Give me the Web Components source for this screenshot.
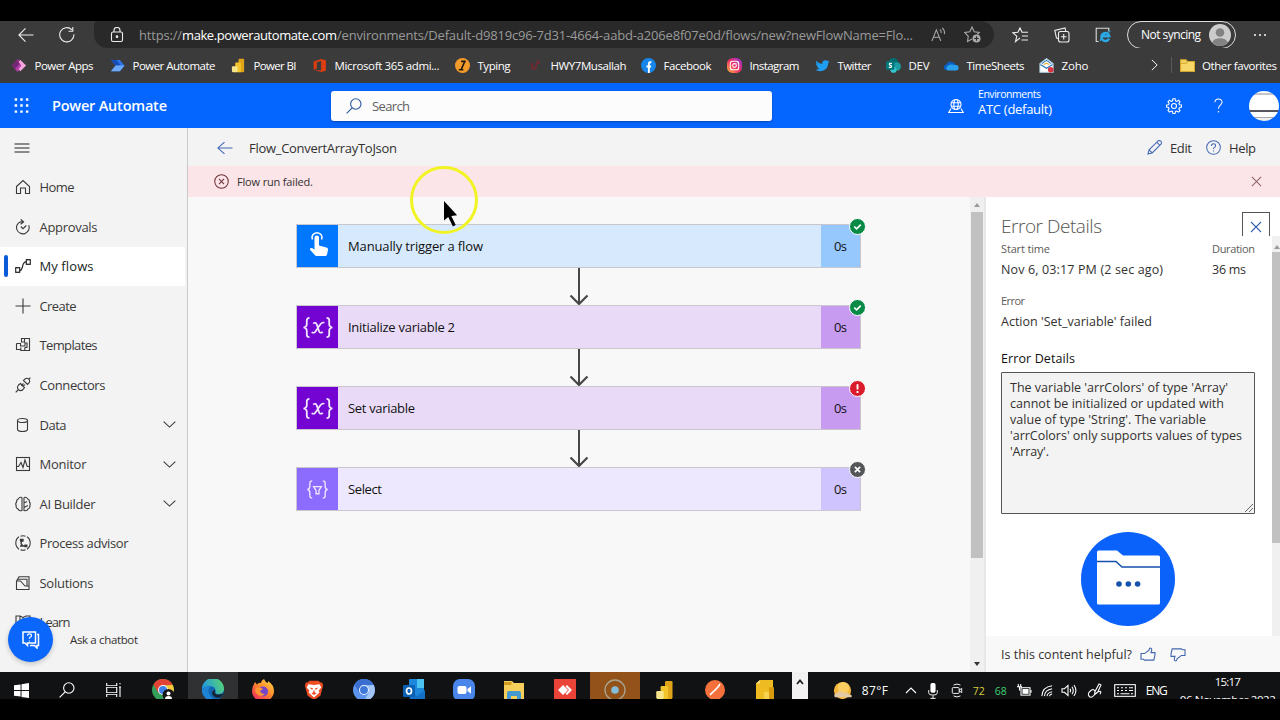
<!DOCTYPE html>
<html lang="en">
<head>
<meta charset="utf-8">
<title>Power Automate</title>
<style>
    html, body {
        margin: 0;
        background: #000;
    }
    body {
        width: 1280px;
        height: 720px;
        overflow: hidden;
        font-family: "Open Sans", "Noto Sans", sans-serif;
        font-size: 13px;
        color: #323130;
    }
</style>
</head>
<body>
<desktop-screen></desktop-screen>

<script>
// icon name -> [viewBox, markup]
const ICONS = {
    back: ["0 0 16 16", `<path d="M15.5 8H1M7.5 1.3L.9 8l6.6 6.7"/>`],
    reload: ["0 0 16 16", `<path d="M14.9 7.2A7.1 7.1 0 1 1 12.9 2.8M13.8 0v4.300H9.500"/>`],
    lock: ["0 0 14 16", `<rect x="1.500" y="5" width="11" height="9.500" rx="1.500"/><path d="M4 5V3.500a3 3 0 0 1 6 0V5"/><circle cx="7" cy="9.700" r=".8" fill="currentColor"/>`],
    aloud: ["0 0 16 16", `<path d="M1 15L5.700 3l4.800 12M2.500 11h6.300M9.500 2.500q1.800 1.800 1.300 4M12 1q3 2.800 2.300 6.500"/>`],
    staradd: ["0 0 17 17", `<path d="M8 13L3.500 15.500l.8-5.200L.8 6.500l5-.7L8 1l2.200 4.800 5 .7-2 2"/><circle cx="12.500" cy="12.500" r="4" fill="#aaa" stroke="none"/><path d="M12.500 10.300v4.400M10.300 12.500h4.400" stroke="#2a2a2a"/>`],
    favs: ["0 0 17 16", `<path d="M8 11L3.500 14.500l1.300-5.300L1 5.800l4.900-.5L8 .9l2 4.300h6M10 9h6M9.500 13h6.500"/>`],
    collect: ["0 0 16 16", `<path d="M4 11.500L2.500 11 .8 3.500 11 .9l.7 3"/><rect x="4.500" y="4.500" width="10.500" height="10.500" rx="2"/><path d="M9.700 7v5.500M7 9.700h5.500"/>`],
    iemode: ["0 0 16 16", `<path d="M3.500 14.500H1.200V1.200h12.600V4" stroke="#ddd"/><path d="M14 11.700A4 4 0 1 1 14.300 9.300H6.700" stroke="#2ba9e6" stroke-width="2.400"/><path d="M5 14Q9 5 15.500 4.500" stroke="#2ba9e6"/>`],
    user: ["0 0 22 22", `<circle cx="11" cy="11" r="11" fill="#ccc" stroke="none"/><circle cx="11" cy="8.500" r="4.300" fill="#828282" stroke="none"/><path d="M3 18.500a8.500 6.500 0 0 1 16 0A11 11 0 0 1 3 18.500" fill="#828282" stroke="none"/>`],
    dots: ["0 0 14 4", `<g fill="currentColor" stroke="none"><circle cx="2" cy="2" r="1.100"/><circle cx="7" cy="2" r="1.100"/><circle cx="12" cy="2" r="1.100"/></g>`],
    powerapps: ["0 0 16 16", `<g stroke="none"><path d="M6 1L0 8l6 7 5-5V5z" fill="#b33ba5"/><path d="M6 1l2 5-5 6-3-4z" fill="#742774"/><path d="M9 2l6 6-6 6-2-2 3-4-3-4z" fill="#f2a6df"/></g>`],
    flow: ["0 0 16 16", `<g stroke="none"><path d="M1 2h9.500l5 6-5 6H1l5-6z" fill="#2f74ea"/><path d="M1 2h6l4.500 6H6z" fill="#164cb8"/><path d="M6 8h9.500l-5 6H1z" fill="#6ba9f8"/></g>`],
    powerbi: ["0 0 16 18", `<g stroke="none"><rect x="8" y="1" width="6" height="16" rx="1" fill="#e0a418"/><rect x="4.500" y="5.500" width="6" height="11.500" rx="1" fill="#f2c52c"/><rect x="1" y="10" width="6" height="7" rx="1" fill="#f9e589"/></g>`],
    office: ["0 0 14 16", `<path d="M1.500 12.500V3.800L8.500 1 13 2.300v11.400L8.500 15l-7-2.500 7 .7V3.300L4.500 4.500v6.800z" fill="#dc3e12" stroke="none"/>`],
    typing: ["0 0 16 16", `<circle cx="8" cy="8" r="8" fill="#f59b2c" stroke="none"/><path d="M6.500 3.500h5M4 12.500h5M10.500 3.500l-4 9" stroke="#251a12" stroke-width="1.800"/>`],
    musallah: ["0 0 16 16", `<path d="M2 6l3 1-1 4 4 1 1-6M9 7l2-4 1 3" stroke="#7a2630" stroke-width="1.500"/>`],
    facebook: ["0 0 16 16", `<circle cx="8" cy="8" r="8" fill="#1686ed" stroke="none"/><path d="M11 4.500H9.700q-1.300 0-1.300 1.500v10M5.800 9h5" stroke="#fff" stroke-width="2"/>`],
    instagram: ["0 0 16 16", `<defs><linearGradient id="ig" x1="0" y1="1" x2="1" y2="0"><stop offset="0" stop-color="#fdb93a"/><stop offset=".5" stop-color="#ee2d66"/><stop offset="1" stop-color="#8a35d8"/></linearGradient></defs><rect width="16" height="16" rx="6" fill="url(#ig)" stroke="none"/><rect x="3.500" y="3.500" width="9" height="9" rx="2.500" stroke="#fff"/><circle cx="8" cy="8" r="2" stroke="#fff"/><circle cx="10.700" cy="5.300" r=".6" fill="#fff" stroke="none"/>`],
    twitter: ["0 0 16 16", `<path d="M1 3q3 3.300 6.800 3.300C7.500 3.500 9 2.300 10.800 2.300q1.400 0 2.200.9l2-.7-1 1.800 1.500-.3-1.500 1.700C14 11 10 14 5.800 14 3.500 14 2 13.500.5 12.500q2.700.2 4.400-1.200-2.300-.2-2.900-2.200h1.300Q1 8.200.9 5.700l1.400.4Q.3 4.500 1 3z" fill="#1f9df0" stroke="none"/>`],
    sharepoint: ["0 0 16 16", `<g stroke="none"><circle cx="8" cy="5" r="5" fill="#036c70"/><circle cx="11.500" cy="9" r="4.500" fill="#1a9ba1"/><circle cx="8" cy="12.500" r="3.300" fill="#37c6d0"/><rect y="3.500" width="9" height="9" rx="1" fill="#03787c"/></g><path d="M6.300 6q-2.800-1-2.800.7 0 .9 1.200 1.200 1.400.4 1.300 1.300-.3 1.400-3 .5" stroke="#fff" stroke-width="1.200"/>`],
    onedrive: ["0 0 17 12" , `<g stroke="none"><path d="M3 11A3 3 0 0 1 2.500 5Q5 0 10 2.500q2.500 1 3 3L7 11z" fill="#0a5fc0"/><path d="M4 11.500a3 3 0 0 1 0-5l3-1.500 6 .5a3 3 0 0 1 1 6z" fill="#28a0f0"/></g>`],
    zoho: ["0 0 16 16", `<path d="M1 6L8 .8 15 6v9.200H1z" fill="#fff" stroke="#b7d7ec"/><path d="M1.500 7l6.500 4 6.500-4" stroke="#2f79be" stroke-width="1.300"/><path d="M3 6l5-3.500L13 6" stroke="#2f79be"/><path d="M5 7l3-1.500L11 7" stroke="#e4b23c" stroke-width="1.300"/><circle cx="12.500" cy="12.500" r="3" fill="#db3340" stroke="none"/>`],
    next: ["0 0 8 14", `<path d="M1 1l6 6-6 6"/>`],
    folder: ["0 0 16 14", `<path d="M.5 13.500V.8h6l1.500 2h7.500v10.700z" fill="#f6d767" stroke="#d3a52c"/><path d="M.5 4.500h6l1.500-1.700"  stroke="#d3a52c"/>`],
    waffle: ["0 0 16 16", `<path d="M.7 1.500h2.600M6.700 1.500h2.600M12.700 1.500h2.600M.7 8h2.600M6.700 8h2.600M12.700 8h2.600M.7 14.500h2.600M6.700 14.500h2.600M12.700 14.500h2.600" stroke-width="2.600"/>`],
    search: ["0 0 16 16", `<circle cx="9.800" cy="6" r="5.200"/><path d="M6.200 9.800L.6 15.400"/>`],
    globe: ["0 0 16 16", `<circle cx="8" cy="6.500" r="5"/><ellipse cx="8" cy="6.500" rx="2.200" ry="5"/><path d="M3.300 4.800h9.400M3.300 8.300h9.400M3 10.500L.8 14.500h14.400L13 10.500"/>`],
    gear: ["0 0 16 16", `<path d="M6.900.8h2.200l.4 2 1.300.6 1.800-1.200 1.400 1.500-1.100 1.700.6 1.300 2 .3v2.100l-2 .5-.6 1.300 1.100 1.700-1.500 1.500-1.700-1.100-1.300.5-.4 2H6.900l-.4-2-1.300-.5-1.700 1.100L2 12.500l1.100-1.700-.6-1.300-2-.5V7l2-.3.6-1.300L2 3.700l1.500-1.500 1.700 1.200 1.300-.6z"/><circle cx="8" cy="8" r="2.500"/>`],
    question: ["0 0 10 16", `<path d="M1 4.500Q1.300 1 5 1t4 3.300Q9 6 7 7.700 5 9.300 5 11.500"/><circle cx="5" cy="14.700" r=".8" fill="currentColor" stroke="none"/>`],
    menu: ["0 0 16 10", `<path d="M.5 1h15M.5 5h15M.5 9h15"/>`],
    home: ["0 0 16 16", `<path d="M1.500 7.500L8 1.500l6.500 6v7h-4V9h-5v5.500h-4z"/>`],
    approvals: ["0 0 16 16", `<path d="M13.700 6.200A6.300 6.300 0 1 1 5.500 2.700L8.300 3M5.800 .3l2.800 2.700-3 2.300M5.800 7.500l2.200 2.200L11.300 6.500"/>`],
    flows: ["0 0 16 14", `<rect x=".7" y="8.500" width="4" height="4"/><rect x="11.300" y="1.500" width="4" height="4"/><path d="M4.700 11q2 0 3-4t3.600-3.600"/>`],
    plus: ["0 0 16 16", `<path d="M8 .5v15M.5 8h15"/>`],
    templates: ["0 0 16 16", `<path d="M6.500 5.500v-4h8v12h-4.700v-3M9.500 1.500v3.500h-3M1.500 6.500h4v2.500H10V6h2v4.500H9.800M1.500 6.500v6h4.300M5.800 10.500v3h4"/>`],
    connectors: ["0 0 16 16", `<path d="M5.500 6.500l4 4-1.500 2q-2 2-4.500.3Q1.500 10.500 3.500 8zM3 13l-2.300 2.300M8.500 3.500l4 4L14 6q1.500-2-.2-3.800T10 2zM13.500 2.500L15.400.6M6.300 8.800L8.500 6.500M7.700 10L10 7.500"/>`],
    data: ["0 0 16 16", `<ellipse cx="7.500" cy="3.500" rx="5" ry="2"/><path d="M2.500 3.500v9q.5 2 5 2t5-2v-9"/>`],
    monitor: ["0 0 16 16", `<rect x="1.500" y="1.500" width="13" height="13"/><path d="M1.500 10.500h2L6 6.500l2 5L10 4l2.200 6.500h2"/>`],
    ai: ["0 0 16 16", `<path d="M7 1.500v13q-3 1-4-1.500Q.5 12 1.200 9.500q-1-2 .4-3.500Q1.300 3.500 3.300 3 4.500.5 7 1.500M9 1.500v13q3 1 4-1.500 2.500-1 1.800-3.500 1-2-.4-3.500.3-2.500-1.700-3Q11.500.5 9 1.500M9 7l3-1.500M9 11.500L13 9.500"/>`],
    process: ["0 0 16 16", `<path d="M4 1.800Q.8 4 .8 8T4 14.200M12 1.800q3.200 2.200 3.200 6.200T12 14.200M5.500 1.300q2.500-1 5 0M5.500 14.700q2.500 1 5 0"/><path d="M5.500 4.500h2.500v1.500H5.500zM6.700 6l-.7 2.500 1.500 2M5 11h2.500M10 10.200v1.300h1.800v-1.300zM7.500 11H10" stroke-width="1.300"/>`],
    solutions: ["0 0 16 16", `<path d="M1.500 14.500v-8.300L4 1.800h10v12.700zM3 4.200h9V11M1.500 6h4l4.500 5h4"/>`],
    learn: ["0 0 16 16", `<path d="M1 14V2h4l3 1.500L11 2h4v12h-4l-3 1.500L5 14zM5 2v12M8 3.500v12"/>`],
    down: ["0 0 14 8", `<path d="M.7.7L7 7 13.300.7"/>`],
    chatbot: ["0 0 18 18", `<path d="M1 1h12.500v11H5.500v2.500L3 12H1zM15 3.500h1.500v11h-1.500v2.500l-2.500-2.500H8" stroke-width="1.500"/><path d="M5.500 4.800q0-2 2-2t2 1.800q0 1-1.300 1.700-.8.500-.8 1.500M7.400 9.500v1" stroke-width="1.200"/>`],
    pencil: ["0 0 16 16", `<path d="M1 15l1.200-4.500L11.800.9Q13.500.3 14.700 1.300t.4 2.900L5.500 13.800zM10.500 2.500l3 3M2.200 10.500l3.300 3.300"/>`],
    help: ["0 0 16 16", `<circle cx="8" cy="8" r="7.300"/><path d="M5.800 6.300q0-2.300 2.200-2.300t2.200 2Q10.200 7 9 7.800T8 9.800M8 11.300v1"/>`],
    failed: ["0 0 16 16", `<circle cx="8" cy="8" r="7.200"/><path d="M5.300 5.300l5.400 5.400M10.700 5.300l-5.400 5.400"/>`],
    close: ["0 0 12 12", `<path d="M1 1l10 10M11 1L1 11"/>`],
    touch: ["0 0 24 30", `<path d="M5.500 8A5 5 0 1 1 14.500 8" stroke-width="1.600"/><path d="M7.500 6q0-2.200 2.300-2.200T12 6v8.500l7.500 2q1.800.6 1.500 2.500l-1 5.500q-.2 1.200-1.500 1.200H9.500Q8.500 25.700 8 25L3.200 19.300q-.8-1 .2-1.800t2.100 0L7.500 19z" fill="currentColor" stroke="none"/>`],
    variable: ["0 0 30 24", `<path d="M7 2Q4.500 2 4.500 4.500v4Q4.500 11.500 1.500 12q3 .5 3 3.500v4Q4.500 22 7 22M23 2q2.500 0 2.500 2.500v4q0 3 3 3.500-3 .5-3 3.500v4Q25.500 22 23 22" stroke-width="1.700"/><path d="M10.500 8Q13 5.500 14 9.500l2 6.500q1 2.800 3.500.5M21 7Q18.500 6 16 10.500T12 17q-1.200.9-3 0" stroke-width="1.700"/>`],
    select: ["0 0 24 20", `<path d="M6.500 1Q4 1 4 3.500v3Q4 9.500 1.500 10 4 10.500 4 13.500v3Q4 19 6.500 19M17.500 1Q20 1 20 3.500v3Q20 9.500 22.500 10 20 10.500 20 13.500v3Q20 19 17.500 19M8 7h8l-2.500 4v3.500h-3V11z" stroke-width="1.400"/>`],
    check: ["0 0 16 16", `<path d="M4.500 8l2.500 2.500L11.500 6" stroke-width="1.800"/>`],
    bang: ["0 0 16 16", `<path d="M8 3.500v5.500M8 10.700v2" stroke-width="2"/>`],
    cross: ["0 0 16 16", `<path d="M5.200 5.200l5.600 5.600M10.800 5.200l-5.600 5.600" stroke-width="1.800"/>`],
    arrow: ["0 0 20 38", `<path d="M10 0v36" stroke-width="1.800"/><path d="M1.500 27.500L10 36l8.500-8.500" stroke="#484644" stroke-width="2.200"/>`],
    like: ["0 0 16 16", `<path d="M1 7h3.500L9 3.500q.3-2.700 1.500-2.500 1.700.5 1.200 2.500L11 6h4v2.500L13.800 14H4.500L3.500 13H1z"/>`],
    runs: ["0 0 94 94", `<circle cx="47" cy="47" r="47" fill="#0b62fb" stroke="none"/><path d="M16 20q0-1.500 1.500-1.500h18.500l6 5h35.500q1.500 0 1.500 1.500v46q0 1.500-1.500 1.500h-60q-1.500 0-1.500-1.500z" fill="#fff" stroke="none"/><path d="M16 29.500h19l6 5.500h38" stroke="#1652ad" stroke-width="1.500"/><g fill="#1652ad" stroke="none"><circle cx="38" cy="52" r="2.800"/><circle cx="47.300" cy="52" r="2.800"/><circle cx="56.600" cy="52" r="2.800"/></g>`],
    windows: ["0 0 16 16", `<path d="M0 2.500l7-1v6H0zM8 1.300l8-1.300v7.500H8zM0 8.500h7v6l-7-1zM8 8.500h8V16l-8-1.200z" fill="#fff" stroke="none"/>`],
    taskview: ["0 0 16 16", `<path d="M.7 0v3h10V0M.7 16v-3h10v3M.7 5h10v6H.7zM14 0v1.500M14 4.500V16M13 4.500h2"/>`],
    chrome: ["0 0 22 22", `<g stroke="none"><circle cx="11" cy="11" r="11" fill="#34a05a"/><path d="M1.500 5.500A11 11 0 0 1 20.700 6L11 6.500 6.500 14z" fill="#e24335"/><path d="M11 6.500l9.700-.5A11 11 0 0 1 11 22l5-9z" fill="#fbc83a"/><circle cx="11" cy="11" r="5" fill="#fff"/><circle cx="11" cy="11" r="4" fill="#3e7fe8"/><circle cx="16.500" cy="16" r="6" fill="#151515"/><circle cx="16.500" cy="14.500" r="2" fill="#fff"/><path d="M13 20q0-3 3.500-3t3.500 3z" fill="#fff"/></g>`],
    edge: ["0 0 22 22", `<defs><linearGradient id="ed" x1="0" y1=".3" x2="1" y2="0"><stop offset="0" stop-color="#2398dc"/><stop offset="1" stop-color="#5cda6b"/></linearGradient></defs><g stroke="none"><circle cx="11" cy="11" r="11" fill="#1264ae"/><path d="M0 10A11 11 0 0 1 22 10q0 5-6 5-3 0-2.500-2.500Q14 8 9 7.300 3.500 6.500 0 10" fill="url(#ed)"/><path d="M0 10Q3.500 6.500 9 7.300q-4.500 4-1 9T15 21.200Q8 23.500 3.500 19T0 10" fill="#1e83d2"/><path d="M13 11q.5 2-.5 3 2.500 3 9 .5l-3 4Q11.500 19.500 10 14.500 10 12 13 11" fill="#15222f"/></g>`],
    firefox: ["0 0 22 22", `<defs><linearGradient id="ff" x1="1" y1="0" x2=".2" y2="1"><stop offset="0" stop-color="#ffe14a"/><stop offset=".5" stop-color="#ff8a2a"/><stop offset="1" stop-color="#ed2862"/></linearGradient></defs><g stroke="none"><path d="M2 5l1-2 2 2.500Q7 3 9 4q0-2.500 3-4 1 3 4 4V2q6 4 6 10A11 10.500 0 0 1 0 12Q0 8 2 5" fill="url(#ff)"/><circle cx="11" cy="12.500" r="5" fill="#7446cc"/><path d="M4 9q3-2 7 1l-3 2q1 3 5 3-4 4-8 0-3-3-1-6" fill="#ff9532"/></g>`],
    brave: ["0 0 22 24", `<g stroke="none"><path d="M6 1h10l2 2 2 0 1 4-3 12-7 5-7-5L1 7l1-4h2z" fill="#ee4c25"/><path d="M5 5l6 1 6-1 2 4-3 4 1 2-3 3-3 3-3-3-3-3 1-2-3-4z" fill="#fff"/><path d="M6 9l4 1-1 2zM16 9l-4 1 1 2zM11 11l1 4 2 1-3 2-3-2 2-1z" fill="#ee4c25"/></g>`],
    chromium: ["0 0 22 22", `<g stroke="none"><circle cx="11" cy="11" r="11" fill="#5d94ee"/><path d="M1.500 5.500A11 11 0 0 1 20.700 6L11 6.500 6.500 14z" fill="#3a6fd0"/><path d="M11 6.500l9.700-.5A11 11 0 0 1 11 22l5-9z" fill="#a4c6f7"/></g><circle cx="11" cy="11" r="4.500" fill="#3f78d7" stroke="#e8f1ff"/>`],
    outlook: ["0 0 22 22", `<g stroke="none"><rect x="6" width="15" height="17" rx="1" fill="#1d87dc"/><path d="M14 0h7v9h-7z" fill="#4cc2f1"/><path d="M6 12l8 5 8-6v11H7z" fill="#1470c4"/><rect y="6" width="12" height="12" rx="1" fill="#0a61b4"/></g><ellipse cx="6" cy="12" rx="2.500" ry="3" stroke="#fff" stroke-width="1.700"/>`],
    zoom: ["0 0 22 22", `<g stroke="none"><rect width="22" height="22" rx="7" fill="#4a86e9"/><rect x="4.500" y="7" width="9" height="8" rx="2" fill="#fff"/><path d="M14.500 10l3.500-2.700v7.400L14.500 12z" fill="#fff"/></g>`],
    explorer: ["0 0 22 22", `<g stroke="none"><path d="M1 20V2h8l2 2h10v16z" fill="#f6ce5c"/><path d="M1 3h8l-1 3H1z" fill="#d39b22"/><path d="M4 21v-7q0-2 2-2h10q2 0 2 2v7h-4v-4H8v4z" fill="#4599cf"/></g>`],
    anydesk: ["0 0 22 22", `<g stroke="none"><rect width="22" height="22" fill="#ea4338"/><path d="M9 6l5 5-5 5-5-5zM13 6l5 5-5 5-1.500-1.500L15 11l-3.500-3.500z" fill="#fff"/></g>`],
    record: ["0 0 22 22", `<circle cx="11" cy="11" r="10" stroke="#aaa48f" stroke-width="1.300"/><circle cx="11" cy="11" r="3.800" fill="#83bdd8" stroke="none"/>`],
    postman: ["0 0 22 22", `<circle cx="11" cy="11" r="10" fill="#f4713d" stroke="none"/><path d="M6 16l8-8 2-3M6.500 15l6-5" stroke="#fff" stroke-width="1.600"/>`],
    pbidoc: ["0 0 22 24", `<g stroke="none"><path d="M2 5l4-4h13v22H2z" fill="#eebb22"/><path d="M2 5l4-4v4z" fill="#fbe17e"/><rect x="15" y="9" width="5" height="15" fill="#d99a0e"/><rect x="10" y="14" width="5" height="10" fill="#f7d24e"/></g>`],
    weather: ["0 0 22 22", `<circle cx="11" cy="11" r="9" fill="#f5b63f" stroke="none"/><circle cx="12" cy="8" r="6" fill="#f9cd60" stroke="none"/><path d="M3 18q-2-3 2-4 3-4 7-.5 4-1 5.500 1.500 4 0 3 3z" fill="#e4c9a6" stroke="none"/>`],
    up: ["0 0 12 7", `<path d="M1 6l5-5 5 5"/>`],
    stripup: ["0 0 8 6", `<path d="M1 5l3-3.500L7 5" stroke-width="1.800"/>`],
    mic: ["0 0 14 18", `<rect x="4" width="6" height="11" rx="2" fill="#fff" stroke="none"/><path d="M2 8v3q0 2.500 5 2.500t5-2.500V8M7 14v3M4 17.300h6"/>`],
    meet: ["0 0 14 18", `<path d="M3 2.500q4-2.500 8 0M3 15.500q4 2.500 8 0"/><rect x="1.500" y="5.500" width="8" height="7" rx="1"/><path d="M9.500 8.500l3-2v5l-3-2"/>`],
    battery: ["0 0 16 14", `<rect x="5" y="4" width="9" height="8"/><rect x="7" y="6" width="5" height="4" fill="#fff"/><path d="M15 6.500v3M1 3h5M2.300 3V0M4.700 3V0M3.500 3v4"/>`],
    wifi: ["0 0 14 14", `<path d="M1 13Q1.500 2.500 13 1M4 13q.5-7 9-8.500M7 13q.5-4 6-5M10 13q0-2 3-2.500" stroke-width="1.200"/>`],
    volume: ["0 0 16 14", `<path d="M1 5h2.500L7 1.500v11L3.500 9H1zM9 5q1.200 2 0 4M11 3q2.500 4 0 8M13 1q3.800 6 0 12"/>`],
    pen: ["0 0 16 16", `<path d="M8 9l4-8 2 1-3.500 8-3 2.500zM8 9Q7 6 4.500 7.500 0 11 2 14t5-1q2-3 5-4t1 3"/>`],
    keyboard: ["0 0 22 14", `<rect x=".7" y=".7" width="20.600" height="12.600"/><path d="M3 4h2M7 4h2M11 4h2M15 4h4M3 7h2M7 7h2M11 7h2M15 7h4M3 10.500h2M6.500 10.500h9M17 10.500h2"/>`],
    pointer: ["0 0 16 26", `<path d="M0 0v19.500l4.500-3.500 5 9.500 3-1.600-4.700-9 6.200-.7z" fill="#000" stroke="none"/>`]
};

class UiIcon extends HTMLElement {
    constructor() {
        super();
        this.attachShadow({mode: "open"});
    }

    connectedCallback() {
        const [viewBox, body] = ICONS[this.getAttribute("name")];
        const w = this.getAttribute("w") || 16;
        const h = this.getAttribute("h") || w;
        this.shadowRoot.innerHTML = `
<style>
    :host { display: inline-block; flex: none; width: ${w}px; height: ${h}px; }
    svg { display: block; }
</style>
<svg width="${w}" height="${h}" viewBox="${viewBox}" fill="none" stroke="currentColor" stroke-width="1.1" preserveAspectRatio="none">${body}</svg>`;
    }
}

// one line of text, tracked so that it takes exactly `w` pixels
class FitText extends HTMLElement {
    constructor() {
        super();
        this.attachShadow({mode: "open"});
    }

    connectedCallback() {
        const w = Number(this.getAttribute("w"));
        this.shadowRoot.innerHTML = `
<style>
    :host { display: block; flex: none; width: ${w}px; white-space: nowrap; }
    span { display: inline-block; }
</style>
<span><slot></slot></span>`;
        const span = this.shadowRoot.querySelector("span");
        const natural = span.getBoundingClientRect().width;
        const count = this.textContent.length;
        if (count > 1) span.style.letterSpacing = (w - natural) / (count - 1) + "px";
    }
}

// base for everything that only renders a static template
class View extends HTMLElement {
    constructor() {
        super();
        this.attachShadow({mode: "open"});
    }

    connectedCallback() {
        this.shadowRoot.innerHTML = this.render();
    }
}

class BrowserBar extends View {
    render() {
        return /*html*/`
<style>
    :host { display: flex; align-items: center; height: 27px; background: #3b3b3b; color: #eee; overflow: hidden; }
    .address { display: flex; align-items: center; width: 884px; height: 27px; padding-left: 16px; margin-left: 18px; border-radius: 4px 14px 14px 14px; background: #292929; color: #999; font-size: 13px; }
    .address ui-icon { color: #aaa; }
    .address .lock { color: #eee; margin-right: 15px; }
    b { font-weight: 400; color: #fff; }
    .sync { display: flex; align-items: center; box-sizing: border-box; width: 109px; height: 28px; margin: 0 17px 0 16px; border: 1px solid #ddd; border-radius: 14px; padding-left: 13px; gap: 8px; font-size: 12px; color: #fff; }
</style>
<ui-icon name="back" style="margin-left:18px"></ui-icon>
<ui-icon name="reload" style="margin-left:25px;margin-right:1px" w="16"></ui-icon>
<div class="address">
    <ui-icon class="lock" name="lock" w="14" h="16"></ui-icon>
    <fit-text w="43">https://</fit-text><fit-text w="155"><b>make.powerautomate.com</b></fit-text><fit-text w="576">/environments/Default-d9819c96-7d31-4664-aabd-a206e8f07e0d/flows/new?newFlowName=Flo...</fit-text>
    <ui-icon name="aloud" w="15" style="margin-left:18px"></ui-icon>
    <ui-icon name="staradd" w="17" style="margin-left:18px"></ui-icon>
</div>
<ui-icon name="favs" w="17" h="16" style="margin-left:18px"></ui-icon>
<ui-icon name="collect" w="16" style="margin-left:25px"></ui-icon>
<ui-icon name="iemode" w="16" style="margin-left:25px"></ui-icon>
<div class="sync"><fit-text w="60">Not syncing</fit-text><ui-icon name="user" w="22"></ui-icon></div>
<ui-icon name="dots" w="14" h="4"></ui-icon>`;
    }
}

class FavoritesBar extends View {
    render() {
        const items = [
            ["powerapps", "Power Apps", 59], ["flow", "Power Automate", 83], ["powerbi", "Power BI", 43],
            ["office", "Microsoft 365 admi...", 105], ["typing", "Typing", 33], ["musallah", "HWY7Musallah", 76],
            ["facebook", "Facebook", 48], ["instagram", "Instagram", 50], ["twitter", "Twitter", 34],
            ["sharepoint", "DEV", 21], ["onedrive", "TimeSheets", 58], ["zoho", "Zoho", 27]
        ];
        return /*html*/`
<style>
    :host { display: flex; align-items: center; box-sizing: border-box; height: 35px; padding-bottom: 1px; background: #3b3b3b; color: #fff; font-size: 11.500px; }
    .items { display: grid; align-items: center; padding-left: 12px; grid-template-columns: 98px 121px 81px 143px 73px 113px 86px 88px 71px 58px 95px 109px; }
    .item { display: flex; align-items: center; gap: 7.500px; }
    i { width: 1px; height: 16px; margin: 0 8px 0 13px; background: #595959; }
</style>
<div class="items">${items.map(([icon, label, w]) => `
    <div class="item"><ui-icon name="${icon}" w="15" h="${icon === "onedrive" ? 11 : 15}"></ui-icon><fit-text w="${w}">${label}</fit-text></div>`).join("")}
</div>
<ui-icon name="next" w="7" h="12" style="margin-left:3px"></ui-icon>
<i></i>
<ui-icon name="folder" w="15" h="13"></ui-icon>
<fit-text w="75" style="margin-left:7px">Other favorites</fit-text>`;
    }
}

class AppHeader extends View {
    render() {
        return /*html*/`
<style>
    :host { display: flex; align-items: center; height: 45px; background: #0566ff; color: #fff; }
    .brand { margin-left: 23px; font-size: 14.500px; font-weight: 600; }
    .search { display: flex; align-items: center; box-sizing: border-box; width: 441px; height: 30px; margin: 0 176px 0 164px; padding-left: 15px; gap: 10px; border-radius: 3px; background: #fcfcfd; color: #616161; box-shadow: 0 1px 2px #0347b5; }
    .search ui-icon { color: #2b579a; }
    .env { width: 188px; margin-left: 14px; padding-bottom: 7px; line-height: 15px; }
    .env small { font-size: 10.500px; }
    .avatar { width: 30px; height: 30px; margin-left: 26px; border-radius: 50%; flex: none; background: linear-gradient(#fff 0 8%, #c6c6ca 8% 12%, #fff 12% 65%, #55565d 65% 70%, #fff 70% 87%, #aaa 87% 91%, #eee 91%); }
</style>
<ui-icon name="waffle" w="15" style="margin-left:14px"></ui-icon>
<fit-text class="brand" w="115">Power Automate</fit-text>
<div class="search"><ui-icon name="search"></ui-icon><fit-text w="38">Search</fit-text></div>
<ui-icon name="globe" w="16"></ui-icon>
<div class="env"><small><fit-text w="63">Environments</fit-text></small><fit-text w="74">ATC (default)</fit-text></div>
<ui-icon name="gear" w="16"></ui-icon>
<ui-icon name="question" w="9" h="15" style="margin-left:32px"></ui-icon>
<div class="avatar"></div>`;
    }
}

class NavItem extends View {
    render() {
        const icon = this.getAttribute("icon");
        return /*html*/`
<style>
    :host { display: flex; align-items: center; box-sizing: border-box; height: 39.550px; margin-right: 2px; padding: 0 9px 0 4px; color: #3b3a39; }
    :host([selected]) { background: #fff; color: #201f1e; }
    i { width: 4px; height: 22px; margin-right: 7px; border-radius: 2px; }
    :host([selected]) i { background: #0b5ad8; }
    slot { display: block; }
    .label { flex: 1; margin-left: 8.500px; }
</style>
<i></i>
<ui-icon name="${icon}" w="16"></ui-icon>
<div class="label"><slot></slot></div>
${this.hasAttribute("open") ? `<ui-icon name="down" w="13" h="7"></ui-icon>` : ""}`;
    }
}

class SideNav extends View {
    render() {
        return /*html*/`
<style>
    :host { display: block; position: relative; box-sizing: border-box; width: 188px; height: 544px; border-right: 1px solid #cacacc; background: #f3f3f3; overflow: hidden; }
    .menu { display: flex; align-items: center; height: 39.500px; padding: 0 0 0 14px; color: #222; }
    .chat { position: absolute; left: 8px; bottom: 10px; display: flex; align-items: center; gap: 17px; font-size: 11.500px; }
    .bubble { display: grid; place-items: center; width: 45px; height: 45px; border-radius: 50%; background: #0b66fb; color: #fff; box-shadow: 0 2px 5px #0003; }
    .ask { background: #f3f3f3; line-height: 22px; }
</style>
<div class="menu"><ui-icon name="menu" w="16" h="10"></ui-icon></div>
<nav-item icon="home"><fit-text w="35">Home</fit-text></nav-item>
<nav-item icon="approvals"><fit-text w="58">Approvals</fit-text></nav-item>
<nav-item icon="flows" selected><fit-text w="54">My flows</fit-text></nav-item>
<nav-item icon="plus"><fit-text w="37">Create</fit-text></nav-item>
<nav-item icon="templates"><fit-text w="58">Templates</fit-text></nav-item>
<nav-item icon="connectors"><fit-text w="66">Connectors</fit-text></nav-item>
<nav-item icon="data" open><fit-text w="27">Data</fit-text></nav-item>
<nav-item icon="monitor" open><fit-text w="47">Monitor</fit-text></nav-item>
<nav-item icon="ai" open><fit-text w="56">AI Builder</fit-text></nav-item>
<nav-item icon="process"><fit-text w="89">Process advisor</fit-text></nav-item>
<nav-item icon="solutions"><fit-text w="54">Solutions</fit-text></nav-item>
<nav-item icon="learn"><fit-text w="31">Learn</fit-text></nav-item>
<div class="chat">
    <div class="bubble"><ui-icon name="chatbot" w="18"></ui-icon></div>
    <div class="ask"><fit-text w="68">Ask a chatbot</fit-text></div>
</div>`;
    }
}

class RunHeader extends View {
    render() {
        return /*html*/`
<style>
    .bar { display: flex; align-items: center; box-sizing: border-box; height: 38px; padding: 1px 24px 0 29px; background: #f3f3f4; }
    .bar ui-icon { color: #4569b5; }
    .title { margin-left: 16px; padding-top: 1px; flex: 1; }
    .banner { display: flex; align-items: center; height: 31px; padding: 0 18px 0 26px; background: #fce5e8; font-size: 11px; }
    .banner fit-text { margin-left: 8px; }
    .banner ui-icon { color: #6f3138; }
    .fill { flex: 1; }
</style>
<div class="bar">
    <ui-icon name="back" w="16" h="14"></ui-icon>
    <div class="title"><fit-text w="148">Flow_ConvertArrayToJson</fit-text></div>
    <ui-icon name="pencil" w="15"></ui-icon><fit-text w="22" style="margin-left:8px">Edit</fit-text>
    <ui-icon name="help" w="15" style="margin-left:14px"></ui-icon><fit-text w="27" style="margin-left:8px">Help</fit-text>
</div>
<div class="banner">
    <ui-icon name="failed" w="15"></ui-icon><fit-text w="76">Flow run failed.</fit-text>
    <div class="fill"></div>
    <ui-icon name="close" w="11" style="color:#8d6266"></ui-icon>
</div>`;
    }
}

class FlowStep extends View {
    render() {
        const icon = this.getAttribute("icon");
        const sizes = {select: `w="23" h="19"`, touch: `w="24" h="28"`, variable: `w="32" h="23"`};
        return /*html*/`
<style>
    :host { display: flex; position: relative; box-sizing: border-box; width: 565px; height: 44px; border: 1px solid #c9c6ce; background: var(--body); color: #111; font-size: 13px; }
    .icon { display: grid; place-items: center; width: 41px; background: var(--strong); color: #f1e6fc; }
    .icon.touch { color: #fff; }
    .icon.touch ui-icon { margin-left: 3px; }
    .name { flex: 1; align-self: center; padding-left: 10px; }
    .time { display: grid; place-items: center; width: 39px; background: var(--soft); }
    .badge { position: absolute; right: -6px; top: -7px; width: 15px; height: 15px; border: 1px solid #fff; border-radius: 50%; background: var(--badge); color: #fff; }
</style>
<div class="icon ${icon}"><ui-icon name="${icon}" ${sizes[icon]}></ui-icon></div>
<div class="name"><slot></slot></div>
<div class="time"><fit-text w="13">0s</fit-text></div>
<div class="badge"><ui-icon name="${this.getAttribute("status")}" w="15"></ui-icon></div>`;
    }
}

class FlowCanvas extends View {
    render() {
        return /*html*/`
<style>
    :host { display: flex; width: 798px; height: 475px; background: #f8f8f8; overflow: hidden; }
    .steps { display: flex; flex-direction: column; align-items: center; width: 781px; margin-right: 1px; padding-top: 27px; }
    ui-icon { color: #333; }
    .steps > ui-icon { margin-bottom: -1px; }
    flow-step { --badge: #078a45; }
    .trigger { --strong: #0077ff; --body: #d7eafd; --soft: #97c8fd; }
    .var { --strong: #7404d2; --body: #e9dbf8; --soft: #c69bf0; }
    .select { --strong: #8c6cff; --body: #ede8fe; --soft: #d0c4fe; --badge: #55565a; }
    .scroll { display: flex; flex-direction: column; align-items: center; width: 14px; background: #f0f0f0; border-right: 2px solid #e8e8e8; }
    .scroll i { width: 12px; height: 346px; background: #c1c1c1; }
    .up, .down { width: 0; height: 0; border: 3.500px solid transparent; }
    .up { border-bottom: 4px solid #999; border-top: 0; margin: 6px 0 5px; }
    .down { border-top: 4px solid #333; border-bottom: 0; margin-top: auto; margin-bottom: 6px; }
</style>
<div class="steps">
    <flow-step class="trigger" icon="touch" status="check"><fit-text w="135">Manually trigger a flow</fit-text></flow-step>
    <ui-icon name="arrow" w="20" h="38"></ui-icon>
    <flow-step class="var" icon="variable" status="check"><fit-text w="107">Initialize variable 2</fit-text></flow-step>
    <ui-icon name="arrow" w="20" h="38"></ui-icon>
    <flow-step class="var" icon="variable" status="bang" style="--badge:#db1b2b"><fit-text w="67">Set variable</fit-text></flow-step>
    <ui-icon name="arrow" w="20" h="38"></ui-icon>
    <flow-step class="select" icon="select" status="cross"><fit-text w="34">Select</fit-text></flow-step>
</div>
<div class="scroll"><div class="up"></div><i></i><div class="down"></div></div>`;
    }
}

class ErrorPanel extends View {
    render() {
        return /*html*/`
<style>
    :host { display: flex; flex-direction: column; flex: 1; height: 475px; background: #fff; }
    .head { display: flex; justify-content: space-between; height: 39px; padding: 0 10px 0 15px; }
    h2 { margin: 15px 0 0; font-size: 19px; line-height: 28px; font-weight: 300; color: #55544f; }
    .x { display: grid; place-items: center; box-sizing: border-box; width: 28px; height: 24px; margin-top: 15px; padding-top: 4px; border: 1px solid #555; border-bottom: 0; color: #3464ae; }
    .body { display: flex; height: 400px; }
    .main { width: 254px; padding-left: 15px; padding-right: 17px; }
    small { display: block; font-size: 11px; line-height: 16px; color: #5c5b59; }
    .row { display: flex; justify-content: space-between; margin-top: 4.500px; }
    .row > :last-child { width: 43px; }
    .value { margin-top: 3px; line-height: 20px; font-size: 12.500px; }
    h3 { margin: 17px 0 3px; font-size: 12.500px; line-height: 20px; font-weight: 500; color: #111; }
    .box { position: relative; box-sizing: border-box; width: 254px; height: 142px; padding: 7px 8px; border: 1px solid #555; border-radius: 1px; background: #f3f3f3; font-size: 12.500px; line-height: 16px; }
    .grip { position: absolute; right: 1px; bottom: 1px; }
    .art { display: flex; justify-content: center; padding-top: 18px; }
    .scroll { width: 8px; background: #f0f0f0; overflow: hidden; }
    .scroll i { display: block; height: 291px; margin-top: 3px; background: #c1c1c1; }
    .tri { width: 0; height: 0; margin: 9px 0 0 2px; border: 3.500px solid transparent; border-top: 0; border-bottom: 4px solid #999; }
    .foot { display: flex; align-items: center; height: 36px; padding-left: 15px; background: #f8f8f8; font-size: 12.500px; }
    .foot ui-icon { color: #4166ad; }
    .flip { transform: rotate(180deg); margin-left: 14px; }
</style>
<div class="head">
    <h2><fit-text w="101">Error Details</fit-text></h2>
    <div class="x"><ui-icon name="close" w="12"></ui-icon></div>
</div>
<div class="body">
    <div class="main">
        <div class="row">
            <div><small><fit-text w="49">Start time</fit-text></small><div class="value"><fit-text w="162">Nov 6, 03:17 PM (2 sec ago)</fit-text></div></div>
            <div><small><fit-text w="43">Duration</fit-text></small><div class="value"><fit-text w="34">36 ms</fit-text></div></div>
        </div>
        <small style="margin-top:13px"><fit-text w="24">Error</fit-text></small>
        <div class="value"><fit-text w="151">Action 'Set_variable' failed</fit-text></div>
        <h3><fit-text w="74">Error Details</fit-text></h3>
        <div class="box">
            <fit-text w="218">The variable 'arrColors' of type 'Array'</fit-text>
            <fit-text w="214">cannot be initialized or updated with</fit-text>
            <fit-text w="196">value of type 'String'. The variable</fit-text>
            <fit-text w="232">'arrColors' only supports values of types</fit-text>
            <fit-text w="39">'Array'.</fit-text>
            <svg class="grip" width="8" height="8" stroke="#666"><path d="M0 8L8 0M4 8l4-4"/></svg>
        </div>
        <div class="art"><ui-icon name="runs" w="94"></ui-icon></div>
    </div>
    <div class="scroll"><div class="tri"></div><i></i></div>
</div>
<div class="foot">
    <fit-text w="131">Is this content helpful?</fit-text>
    <ui-icon name="like" w="16" h="15" style="margin-left:8px"></ui-icon>
    <ui-icon class="flip" name="like" w="16" h="15"></ui-icon>
</div>`;
    }
}

class TaskBar extends View {
    render() {
        const apps = ["chrome", "edge", "firefox", "brave", "chromium", "outlook", "zoom", "explorer", "anydesk", "record", "powerbi", "postman", "pbidoc"];
        return /*html*/`
<style>
    :host { display: flex; height: 27px; background: #111213; color: #fff; overflow: hidden; }
    .cell { display: grid; flex: none; place-items: center; width: 50.200px; height: 36px; }
    .sys { width: 45.500px; }
    .edge { background: #303132; }
    .record { background: #93521a; }
    .strip { display: flex; flex: none; justify-content: center; width: 16px; height: 27px; margin-left: 1.400px; padding-top: 7px; box-sizing: border-box; background: #f2f2f2; color: #222; }
    .tray { display: flex; align-items: center; height: 37px; padding-left: 24px; font-size: 12px; }
    .clock { margin-left: 12px; font-size: 11.500px; line-height: 18px; width: 96px; }
</style>
<div class="cell" style="width:43px"><ui-icon name="windows" w="15"></ui-icon></div>
<div class="cell sys" style="width:47px"><ui-icon name="search" w="16" h="16"></ui-icon></div>
<div class="cell sys" style="width:48px"><ui-icon name="taskview" w="16" h="14"></ui-icon></div>
${apps.map(name => `<div class="cell ${name}"><ui-icon name="${name}" w="${name === "powerbi" || name === "brave" ? 20 : 22}"></ui-icon></div>`).join("")}
<div class="strip"><ui-icon name="stripup" w="8" h="6"></ui-icon></div>
<div class="tray">
    <ui-icon name="weather" w="21"></ui-icon>
    <fit-text w="26" style="margin-left:9px">87°F</fit-text>
    <ui-icon name="up" w="12" h="7" style="margin-left:17px"></ui-icon>
    <ui-icon name="mic" w="12" h="16" style="margin-left:10px"></ui-icon>
    <ui-icon name="meet" w="12" h="15" style="margin-left:12px"></ui-icon>
    <fit-text w="12" style="margin-left:10px;font-size:10.500px;color:#d9cf3c">72</fit-text>
    <fit-text w="12" style="margin-left:10px;font-size:10.500px;color:#3fcf72">68</fit-text>
    <ui-icon name="battery" w="16" h="13" style="margin-left:9px"></ui-icon>
    <ui-icon name="wifi" w="12" h="12" style="margin-left:9px"></ui-icon>
    <ui-icon name="volume" w="16" h="13" style="margin-left:8px"></ui-icon>
    <ui-icon name="pen" w="16" h="15" style="margin-left:10px"></ui-icon>
    <ui-icon name="keyboard" w="22" h="13" style="margin-left:11px"></ui-icon>
    <fit-text w="22" style="margin-left:10px">ENG</fit-text>
    <div class="clock"><fit-text w="26" style="margin:0 auto">15:17</fit-text><fit-text w="96">06 November 2022</fit-text></div>
</div>`;
    }
}

class DesktopScreen extends View {
    render() {
        return /*html*/`
<style>
    :host { display: block; position: relative; width: 1280px; height: 720px; padding-top: 21px; box-sizing: border-box; background: #000; overflow: hidden; }
    .page { display: flex; height: 544px; }
    main { flex: 1; }
    .work { display: flex; }
    .ring { position: absolute; left: 410px; top: 166px; width: 62px; height: 62px; border: 3px solid #f1f421; border-radius: 50%; }
    .pointer { position: absolute; left: 444px; top: 201px; }
</style>
<browser-bar></browser-bar>
<favorites-bar></favorites-bar>
<app-header></app-header>
<div class="page">
    <side-nav></side-nav>
    <main>
        <run-header></run-header>
        <div class="work">
            <flow-canvas></flow-canvas>
            <error-panel></error-panel>
        </div>
    </main>
</div>
<task-bar></task-bar>
<div class="ring"></div>
<ui-icon class="pointer" name="pointer" w="15" h="26"></ui-icon>`;
    }
}

customElements.define("ui-icon", UiIcon);
customElements.define("browser-bar", BrowserBar);
customElements.define("favorites-bar", FavoritesBar);
customElements.define("app-header", AppHeader);
customElements.define("nav-item", NavItem);
customElements.define("side-nav", SideNav);
customElements.define("run-header", RunHeader);
customElements.define("flow-step", FlowStep);
customElements.define("flow-canvas", FlowCanvas);
customElements.define("error-panel", ErrorPanel);
customElements.define("task-bar", TaskBar);
customElements.define("desktop-screen", DesktopScreen);
// last: it measures itself, so the rest has to be laid out already
customElements.define("fit-text", FitText);
</script>
</body>
</html>
